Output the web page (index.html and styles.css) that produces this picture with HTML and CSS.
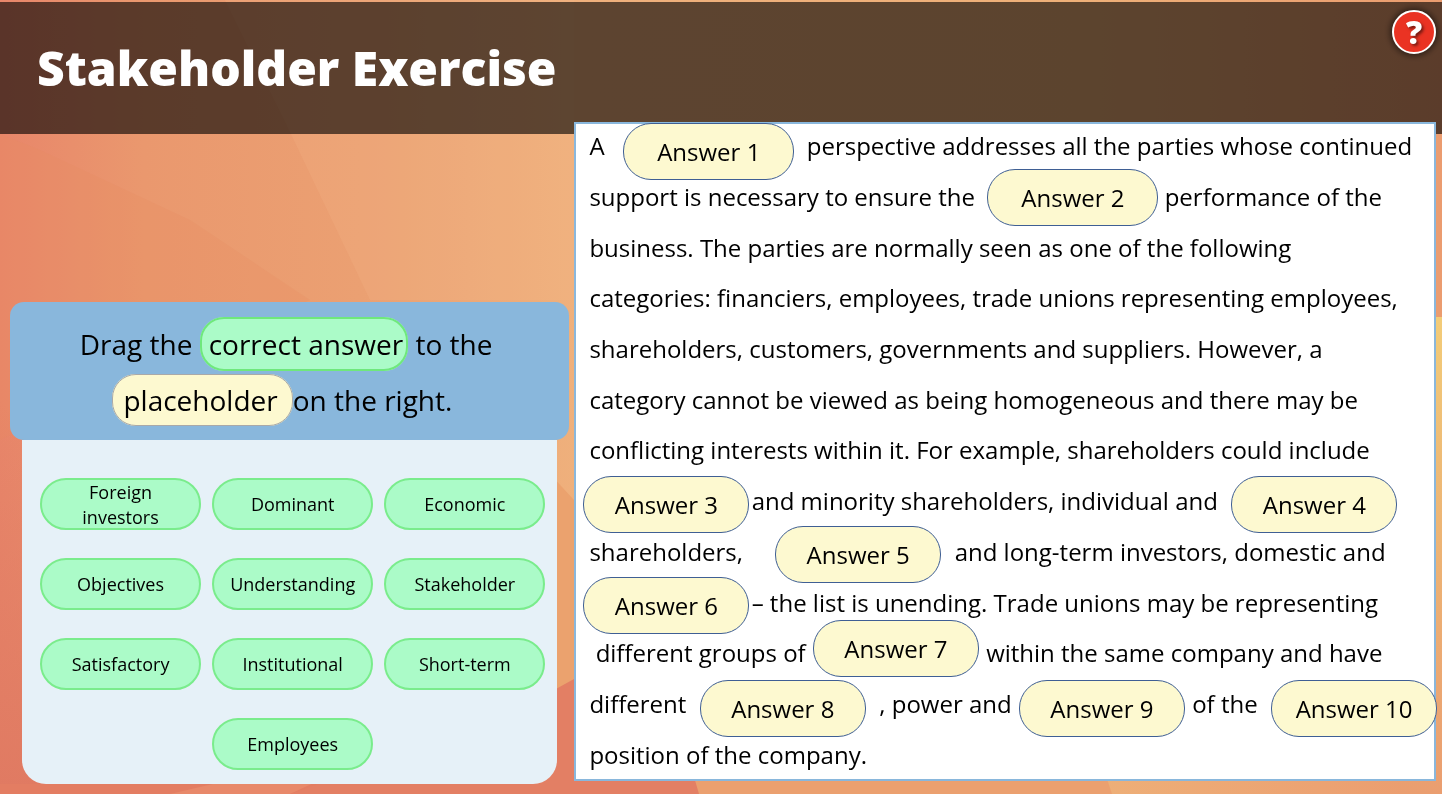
FILE: index.html
```html
<!DOCTYPE html>
<html lang="en">
<head>
    <meta charset="UTF-8">
    <title>Stakeholder Exercise</title>
    <link rel="stylesheet" href="styles.css">
</head>
<body>
<svg class="backdrop" viewBox="0 0 1442 794" preserveAspectRatio="none" aria-hidden="true">
    <defs>
        <linearGradient id="base" x1="0" y1="0" x2="1" y2="0">
            <stop offset="0" stop-color="#e8866a"/>
            <stop offset="0.1" stop-color="#ea986e"/>
            <stop offset="0.25" stop-color="#eba072"/>
            <stop offset="0.4" stop-color="#efb07c"/>
            <stop offset="0.75" stop-color="#eeb078"/>
            <stop offset="1" stop-color="#eb9c6f"/>
        </linearGradient>
        <linearGradient id="low" x1="0" y1="0" x2="0" y2="1">
            <stop offset="0" stop-color="#e07a62" stop-opacity="0"/>
            <stop offset="1" stop-color="#e07a62"/>
        </linearGradient>
        <linearGradient id="side" x1="0" y1="0" x2="0" y2="1">
            <stop offset="0" stop-color="#f3cc78"/>
            <stop offset="0.3" stop-color="#eebb76"/>
            <stop offset="1" stop-color="#ea9e70"/>
        </linearGradient>
    </defs>
    <rect width="1442" height="794" fill="url(#base)"/>
    <polygon points="0,134 40,150 190,220 310,300 0,440" fill="#e98a60" opacity="0.25"/>
    <polygon points="225,0 291,134 370,300 574,300 574,0" fill="#f4b98a" opacity="0.2"/>
    <polygon points="1442,317 1400,317 1400,794 1442,794" fill="url(#side)"/>
    <polygon points="0,400 30,440 60,794 0,794" fill="url(#low)"/>
    <polygon points="550,474 574,500 574,700 550,700" fill="#eba26e"/>
    <polygon points="0,784 574,784 574,794 0,794" fill="#e37d62"/>
    <polygon points="170,794 230,780 320,780 290,794" fill="#e8896a"/>
    <polygon points="500,720 574,679 700,679 796,780 802,794 290,794" fill="#e37f64"/>
    <polygon points="692,770 699,794 1112,794 1104,770" fill="#eba06f"/>
</svg>
<header class="title-bar">
    <h1>Stakeholder Exercise</h1>
    <button class="help" aria-label="Help">?</button>
</header>
<main class="exercise">
    <section class="answers">
        <p class="instruction">
            Drag the <span class="mark">correct answer</span> to the&nbsp;<br>
            <span class="mark mark-placeholder">placeholder</span>on the right.&nbsp;&nbsp;
        </p>
        <div class="answer-bank">
            <button class="answer" draggable="true">Foreign investors</button>
            <button class="answer" draggable="true">Dominant</button>
            <button class="answer" draggable="true">Economic</button>
            <button class="answer" draggable="true">Objectives</button>
            <button class="answer" draggable="true">Understanding</button>
            <button class="answer" draggable="true">Stakeholder</button>
            <button class="answer" draggable="true">Satisfactory</button>
            <button class="answer" draggable="true">Institutional</button>
            <button class="answer" draggable="true">Short-term</button>
            <button class="answer answer-last" draggable="true">Employees</button>
        </div>
    </section>
    <section class="passage">
        <div class="lines">
            <div class="line">A   <span class="slot slot-wide slot-low">Answer 1</span>  perspective addresses all the parties whose continued</div>
            <div class="line">support is necessary to ensure the  <span class="slot slot-wide slot-mid">Answer 2</span> performance of the</div>
            <div class="line">business. The parties are normally seen as one of the following</div>
            <div class="line">categories: financiers, employees, trade unions representing employees,</div>
            <div class="line">shareholders, customers, governments and suppliers. However, a</div>
            <div class="line">category cannot be viewed as being homogeneous and there may be</div>
            <div class="line">conflicting interests within it. For example, shareholders could include</div>
            <div class="line"><span class="slot slot-first">Answer 3</span> and minority shareholders, individual and  <span class="slot">Answer 4</span></div>
            <div class="line">shareholders,     <span class="slot">Answer 5</span>  and long-term investors, domestic and</div>
            <div class="line"><span class="slot slot-first">Answer 6</span> – the list is unending. Trade unions may be representing</div>
            <div class="line"> different groups of <span class="slot slot-high">Answer 7</span> within the same company and have</div>
            <div class="line">different  <span class="slot slot-low">Answer 8</span>  , power and <span class="slot slot-low">Answer 9</span> of the  <span class="slot slot-low">Answer 10</span></div>
            <div class="line">position of the company.</div>
        </div>
    </section>
</main>
</body>
</html>
```
FILE: styles.css
```css
* {
    box-sizing: border-box;
}

body {
    margin: 0;
    min-height: 100vh;
    display: flex;
    flex-direction: column;
    font-family: "Open Sans", "Noto Sans", sans-serif;
    color: #000;
    background-color: #eeab78;
}

button {
    font-family: inherit;
    color: inherit;
    cursor: pointer;
}

.backdrop {
    position: fixed;
    top: 0;
    left: 0;
    width: 100%;
    height: 100%;
    z-index: -1;
}

.title-bar {
    display: flex;
    justify-content: space-between;
    align-items: flex-start;
    height: 132px;
    margin-top: 2px;
    padding: 8px 6px 0 37px;
    background-color: rgba(0, 0, 0, 0.61);
}

.title-bar h1 {
    margin: 25px 0 0;
    font-size: 48px;
    line-height: 66px;
    font-weight: 800;
    color: #fff;
}

.help {
    width: 44px;
    height: 44px;
    padding: 0;
    border: 2px solid #fff;
    border-radius: 50%;
    background-color: #ea3323;
    color: #fff;
    font-size: 32px;
    line-height: 38px;
    font-weight: 800;
    text-shadow: 2px 2px 3px rgba(0, 0, 0, 0.5);
    box-shadow: 0 0 6px 2px rgba(0, 0, 0, 0.5);
}

.exercise {
    flex: 1;
    display: grid;
    grid-template-columns: minmax(0, 4fr) minmax(0, 6fr);
    padding: 0 6px 13px 0;
}

.answers {
    display: flex;
    flex-direction: column;
    justify-content: flex-end;
    padding: 0 5px 0 10px;
    margin-bottom: -3px;
}

.instruction {
    margin: 0;
    padding: 14px 0 12px;
    border-radius: 14px;
    background-color: #89b7dc;
    font-size: 28px;
    line-height: 56px;
    text-align: center;
}

.mark {
    padding: 6px 3px 6px 7px;
    border: 2px solid #6fe87c;
    border-radius: 24px;
    background-color: #abfbc8;
}

.mark-placeholder {
    padding: 6px 14px 6px 10px;
    border: 1px solid #a9a9a9;
    background-color: #fdf9d0;
}

.answer-bank {
    display: grid;
    grid-template-columns: repeat(3, minmax(0, 1fr));
    gap: 28px 11px;
    margin: 0 12px;
    padding: 38px 12px 14px 18px;
    border-radius: 0 0 24px 24px;
    background-color: #e6f1f8;
}

.answer {
    height: 52px;
    padding: 0 16px;
    border: 2px solid #7aec8c;
    border-radius: 26px;
    background-color: #abfbc8;
    font-size: 18px;
    line-height: 25px;
}

.answer:first-child {
    padding: 0 36px;
}

.answer-last {
    grid-column: 2;
}

.passage {
    margin-top: -12px;
    padding: 0 13px;
    border: 2px solid #89b7dc;
    background-color: #fff;
}

.lines {
    display: grid;
    grid-template-rows: repeat(13, 1fr);
    height: calc(100% + 4px);
    margin: -3px 0 -1px;
}

.line {
    display: flex;
    align-items: center;
    font-size: 24px;
    line-height: 32px;
    white-space: pre;
}

/* slots are taller than a line, so they spill over its edges */
.slot {
    flex: none;
    width: 166px;
    height: 57px;
    margin: -6px 1px -12px;
    border: 1px solid #3f5f94;
    border-radius: 28px;
    background-color: #fdf9d0;
    line-height: 55px;
    text-align: center;
}

.slot-wide {
    width: 171px;
    margin-left: 0;
    margin-right: 0;
}

.slot-high {
    margin-top: -14px;
    margin-bottom: -4px;
}

.slot-mid {
    margin-top: -9px;
    margin-bottom: -9px;
}

.slot-low {
    margin-top: -4px;
    margin-bottom: -14px;
}

.slot-first {
    margin-left: -6px;
    margin-right: -4px;
}
```
